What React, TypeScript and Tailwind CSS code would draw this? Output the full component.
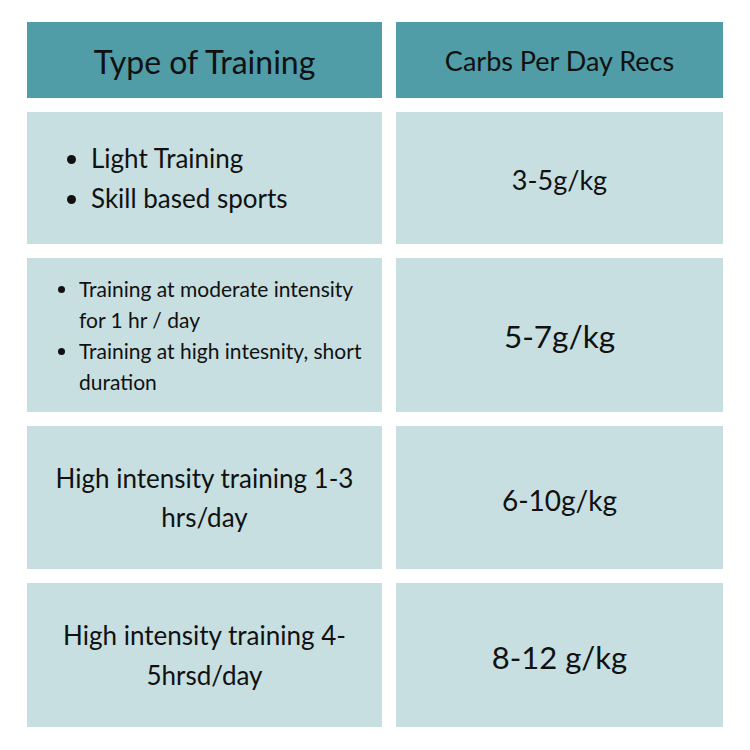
const rows = [
  {
    left: (
      <ul className="list-disc pl-[64px] text-[26px] leading-[40px]">
        <li>Light Training</li>
        <li>Skill based sports</li>
      </ul>
    ),
    right: <span className="text-[27px]">3-5g/kg</span>,
    h: 'h-[132px]'
  },
  {
    left: (
      <ul className="list-disc pl-[52px] pr-[6px] text-[21px] leading-[31px]">
        <li>Training at moderate intensity for 1 hr / day</li>
        <li>Training at high intesnity, short duration</li>
      </ul>
    ),
    right: <span className="text-[31.5px]">5-7g/kg</span>,
    h: 'h-[154px]'
  },
  {
    left: (
      <p className="px-[24px] text-center text-[26px] leading-[39px]">
        High intensity training 1-3 hrs/day
      </p>
    ),
    right: <span className="text-[28px]">6-10g/kg</span>,
    h: 'h-[143px]'
  },
  {
    left: (
      <p className="px-[30px] text-center text-[26px] leading-[40px]">
        High intensity training 4-5hrsd/day
      </p>
    ),
    right: <span className="text-[31px]">8-12 g/kg</span>,
    h: 'h-[144px]'
  }
]

export default function App() {
  return (
    <div
      className="w-[750px] h-[750px] bg-white pt-[22px] pl-[27px] text-[#111]"
      style={{ fontFamily: 'Lato, "Open Sans", sans-serif' }}
    >
      <div className="grid grid-cols-[355px_327px] gap-x-[14px] gap-y-[14px]">
        <div className="h-[76px] bg-[#509ca7] flex items-center justify-center pt-[3px] text-[32px]">
          Type of Training
        </div>
        <div className="h-[76px] bg-[#509ca7] flex items-center justify-center pt-[3px] text-[27px]">
          Carbs Per Day Recs
        </div>
        {rows.map((row, i) => (
          <div key={i} className="contents">
            <div className={`${row.h} bg-[#c7dfe1] flex flex-col justify-center`}>{row.left}</div>
            <div className={`${row.h} bg-[#c7dfe1] flex items-center justify-center pt-[4px]`}>
              {row.right}
            </div>
          </div>
        ))}
      </div>
    </div>
  )
}
